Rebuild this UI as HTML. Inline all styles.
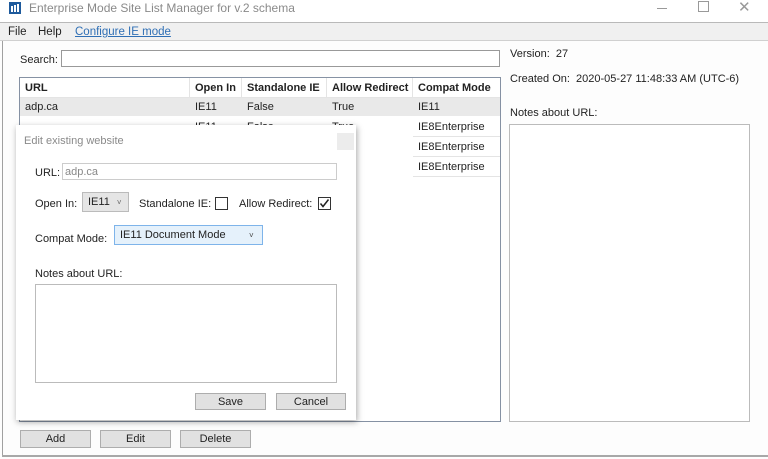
<!DOCTYPE html>
<html><head><style>
*{margin:0;padding:0;box-sizing:border-box}
body{width:768px;height:459px;background:#fdfdfd;font-family:"Liberation Sans",sans-serif;font-size:11px;color:#222;position:relative;overflow:hidden}
.a{position:absolute;white-space:nowrap}
.box{position:absolute;border:1px solid #adadad;background:#fff}
.btn{position:absolute;border:1px solid #adadad;background:#e1e1e1;text-align:center;line-height:17px;font-size:11px}
.cell{position:absolute;height:20px;line-height:21px;padding-left:5px;border-bottom:1px solid #e4e4e4}
</style></head><body>
<div class="a" style="left:0;top:0;width:768px;height:22px;background:#fff"></div>
<div class="a" style="left:9px;top:2px;width:12px;height:12px;background:#1e5a9c"></div>
<div class="a" style="left:11px;top:6px;width:2px;height:6px;background:#fff"></div>
<div class="a" style="left:14px;top:5px;width:2px;height:7px;background:#fff"></div>
<div class="a" style="left:17px;top:4px;width:2px;height:8px;background:#fff"></div>
<div class="a" style="left:29px;top:1px;font-size:12px;color:#8a8a8a">Enterprise Mode Site List Manager for v.2 schema</div>
<div class="a" style="left:657px;top:8px;width:10px;height:1px;background:#999"></div>
<div class="a" style="left:698px;top:1px;width:11px;height:11px;border:1px solid #999"></div>
<div class="a" style="left:738px;top:-2px;font-size:15px;color:#999">✕</div>
<div class="a" style="left:0;top:22px;width:768px;height:19px;background:#f0f0f0;border-top:1px solid #b9b9b9;border-bottom:1px solid #d0d0d0"></div>
<div class="a" style="left:8px;top:26px;font-size:11.5px">File</div>
<div class="a" style="left:38px;top:26px;font-size:11.5px">Help</div>
<div class="a" style="left:75px;top:26px;font-size:11.5px;color:#2f6fb5;text-decoration:underline">Configure IE mode</div>
<div class="a" style="left:2px;top:41px;width:1px;height:415px;background:#a0a0a0"></div>
<div class="a" style="left:2px;top:455px;width:766px;height:2px;background:#a8a8a8"></div>
<div class="a" style="left:20px;top:54px">Search:</div>
<div class="box" style="left:61px;top:50px;width:439px;height:17px;border-color:#999"></div>
<div class="box" style="left:19px;top:77px;width:482px;height:345px;border-color:#8591a3"></div>
<div class="a" style="left:20px;top:97px;width:480px;height:19px;background:#e9e9e9"></div>
<div class="a" style="left:20px;top:78px;width:480px;font-weight:bold">
<div class="cell" style="left:0;width:170px;border-right:1px solid #e4e4e4">URL</div>
<div class="cell" style="left:170px;width:52px;border-right:1px solid #e4e4e4">Open In</div>
<div class="cell" style="left:222px;width:85px;border-right:1px solid #e4e4e4">Standalone IE</div>
<div class="cell" style="left:307px;width:86px;border-right:1px solid #e4e4e4;overflow:hidden">Allow Redirect</div>
<div class="cell" style="left:393px;width:87px">Compat Mode</div>
</div>
<div class="a" style="left:20px;top:97px;width:480px">
<div class="cell" style="left:0;width:480px;border:0">adp.ca</div>
<div class="cell" style="left:170px;border:0">IE11</div>
<div class="cell" style="left:222px;border:0">False</div>
<div class="cell" style="left:307px;border:0">True</div>
<div class="cell" style="left:393px;border:0">IE11</div>
<div class="cell" style="left:393px;top:20px;width:87px">IE8Enterprise</div>
<div class="cell" style="left:393px;top:40px;width:87px">IE8Enterprise</div>
<div class="cell" style="left:393px;top:60px;width:87px">IE8Enterprise</div>
<div class="cell" style="left:170px;top:20px;border:0">IE11</div>
<div class="cell" style="left:222px;top:20px;border:0">False</div>
<div class="cell" style="left:307px;top:20px;border:0">True</div>
</div>
<div class="a" style="left:510px;top:48px">Version:&nbsp; 27</div>
<div class="a" style="left:510px;top:73px">Created On:&nbsp; 2020-05-27 11:48:33 AM (UTC-6)</div>
<div class="a" style="left:510px;top:107px">Notes about URL:</div>
<div class="box" style="left:509px;top:124px;width:241px;height:298px;border-color:#bbb"></div>
<div class="btn" style="left:20px;top:430px;width:71px;height:18px">Add</div>
<div class="btn" style="left:100px;top:430px;width:71px;height:18px">Edit</div>
<div class="btn" style="left:180px;top:430px;width:71px;height:18px">Delete</div>
<div class="a" style="left:16px;top:125px;width:340px;height:295px;background:#fff;box-shadow:1px 2px 6px rgba(0,0,0,.35)"></div>
<div class="a" style="left:24px;top:135px;color:#8a8a8a">Edit existing website</div>
<div class="a" style="left:337px;top:133px;width:17px;height:17px;background:#ececec"></div>
<div class="a" style="left:35px;top:167px">URL:</div>
<div class="box" style="left:62px;top:163px;width:275px;height:17px;border-color:#ccc;color:#888;padding-left:2px;line-height:16px">adp.ca</div>
<div class="a" style="left:35px;top:198px">Open In:</div>
<div class="box" style="left:82px;top:192px;width:47px;height:20px;background:#e5e5e5;border-color:#bbb;line-height:19px;padding-left:5px">IE11 <span style="font-size:8px;color:#666;margin-left:4px">˅</span></div>
<div class="a" style="left:139px;top:198px">Standalone IE:</div>
<div class="box" style="left:215px;top:197px;width:13px;height:13px;border-color:#333"></div>
<div class="a" style="left:239px;top:198px">Allow Redirect:</div>
<div class="box" style="left:318px;top:197px;width:13px;height:13px;border-color:#333"></div>
<svg class="a" style="left:318px;top:197px" width="13" height="13"><path d="M2.5 6.5 L5 9.5 L10.5 2.5" stroke="#222" stroke-width="1.5" fill="none"/></svg>
<div class="a" style="left:35px;top:233px">Compat Mode:</div>
<div class="box" style="left:114px;top:225px;width:149px;height:20px;background:#e5f1fb;border-color:#7eb4ea;line-height:19px;padding-left:5px">IE11 Document Mode<span class="a" style="left:134px;top:0;font-size:8px;color:#444">˅</span></div>
<div class="a" style="left:35px;top:268px">Notes about URL:</div>
<div class="box" style="left:35px;top:284px;width:302px;height:99px;border-color:#bbb"></div>
<div class="btn" style="left:195px;top:393px;width:71px;height:17px">Save</div>
<div class="btn" style="left:276px;top:393px;width:70px;height:17px">Cancel</div>
</body></html>
